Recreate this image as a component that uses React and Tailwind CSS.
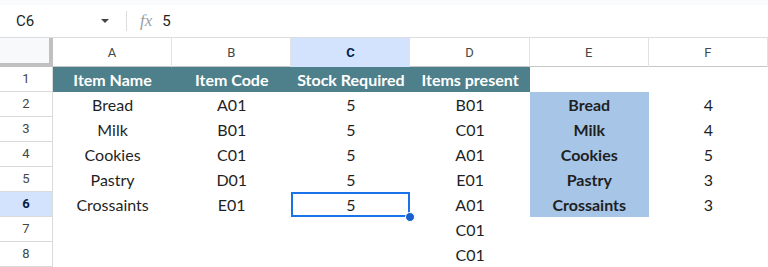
import React from 'react';

const cols = ['A', 'B', 'C', 'D', 'E', 'F'];

const rows = [
    { a: 'Item Name', b: 'Item Code', c: 'Stock Required', d: 'Items present', e: '', f: '', head: true },
    { a: 'Bread', b: 'A01', c: '5', d: 'B01', e: 'Bread', f: '4' },
    { a: 'Milk', b: 'B01', c: '5', d: 'C01', e: 'Milk', f: '4' },
    { a: 'Cookies', b: 'C01', c: '5', d: 'A01', e: 'Cookies', f: '5' },
    { a: 'Pastry', b: 'D01', c: '5', d: 'E01', e: 'Pastry', f: '3' },
    { a: 'Crossaints', b: 'E01', c: '5', d: 'A01', e: 'Crossaints', f: '3' },
    { a: '', b: '', c: '', d: 'C01', e: '', f: '' },
    { a: '', b: '', c: '', d: 'C01', e: '', f: '' },
];

const cellFont = { fontFamily: 'Lato, "Open Sans", sans-serif' };

const Cell = ({ children, className = '' }) => (
    <div className={`h-[25px] flex items-center justify-center text-[16px] text-[#1f1f1f] ${className}`} style={cellFont}>
        {children}
    </div>
);

const App = () => {
    return (
        <div className="w-[768px] h-[267px] overflow-hidden bg-white" style={{ fontFamily: 'Roboto, "Liberation Sans", sans-serif' }}>
            {/* formula bar */}
            <div className="h-[5px] bg-[#f9fbfd]" />
            <div className="h-[33px] flex items-center border-b border-[#dadce0]">
                <div className="w-[118px] pl-[16px] pr-[8px] flex items-center justify-between text-[15px] text-[#1f1f1f]">
                    <span>C6</span>
                    <svg width="10" height="6" viewBox="0 0 10 6"><path d="M1 1h8L5 5z" fill="#444" /></svg>
                </div>
                <div className="w-px h-[20px] bg-[#dadce0] ml-[8px]" />
                <span className="ml-[13px] text-[17px] italic text-[#9aa0a6]" style={{ fontFamily: '"Liberation Serif", serif' }}>fx</span>
                <span className="ml-[10px] text-[15px] text-[#1f1f1f]">5</span>
            </div>

            {/* column headers */}
            <div className="grid grid-cols-[53px_repeat(6,1fr)] h-[29px] border-b border-[#c4c7c5]">
                <div className="bg-[#f8f9fa] border-r-4 border-b-4 border-[#c0c0c0] h-[29px]" />
                {cols.map((c) => (
                    <div
                        key={c}
                        className={`flex items-center justify-center text-[13px] border-r border-[#e1e3e1] ${c === 'C' ? 'bg-[#d3e3fd] font-bold text-[#041e49]' : 'text-[#444746]'}`}
                    >
                        {c}
                    </div>
                ))}
            </div>

            {/* rows */}
            {rows.map((r, i) => {
                const n = i + 1;
                const sel = n === 6;
                return (
                    <div key={n} className="grid grid-cols-[53px_repeat(6,1fr)] h-[25px]">
                        <div
                            className={`flex items-center justify-center text-[13px] border-r border-b border-[#d9dbd9] ${sel ? 'bg-[#d3e3fd] font-bold text-[#041e49]' : 'text-[#444746]'}`}
                        >
                            {n}
                        </div>
                        {r.head ? (
                            <>
                                <Cell className="bg-[#4e808c] text-white font-bold">{r.a}</Cell>
                                <Cell className="bg-[#4e808c] text-white font-bold">{r.b}</Cell>
                                <Cell className="bg-[#4e808c] text-white font-bold">{r.c}</Cell>
                                <Cell className="bg-[#4e808c] text-white font-bold">{r.d}</Cell>
                                <Cell />
                                <Cell />
                            </>
                        ) : (
                            <>
                                <Cell>{r.a}</Cell>
                                <Cell>{r.b}</Cell>
                                <div className="relative">
                                    <Cell>{r.c}</Cell>
                                    {sel && (
                                        <>
                                            <div className="absolute inset-0 border-2 border-[#1a73e8]" />
                                            <div className="absolute right-[-5px] bottom-[-5px] w-[10px] h-[10px] rounded-full bg-[#1a5fd0] border border-white" />
                                        </>
                                    )}
                                </div>
                                <Cell>{r.d}</Cell>
                                <Cell className={r.e ? 'bg-[#a6c5e7] font-bold' : ''}>{r.e}</Cell>
                                <Cell>{r.f}</Cell>
                            </>
                        )}
                    </div>
                );
            })}
        </div>
    );
};

export default App;
